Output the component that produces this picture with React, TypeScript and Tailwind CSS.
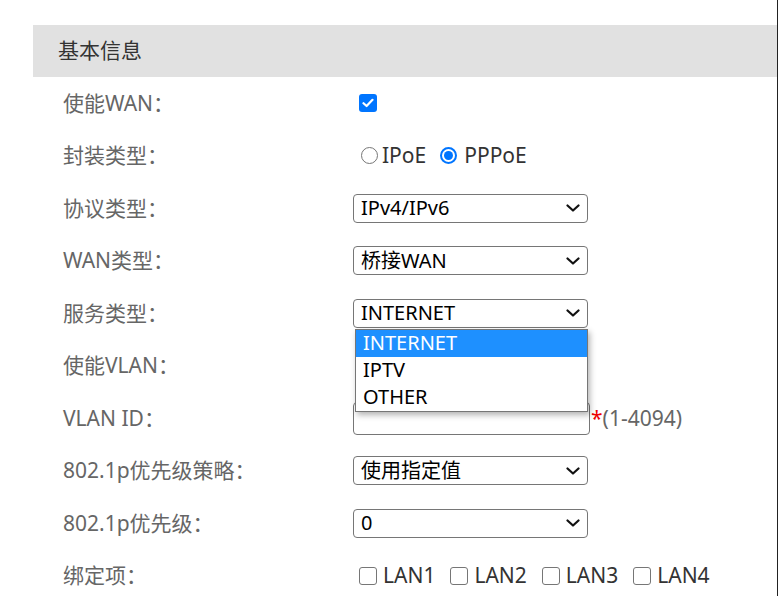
import React from 'react';

const FONT = { fontFamily: '"Noto Sans", "Noto Sans CJK SC", sans-serif' };

function Chevron() {
  return (
    <svg width="14" height="8" viewBox="0 0 14 8" className="shrink-0">
      <path d="M1.5 1.5 L7 6.5 L12.5 1.5" fill="none" stroke="#111" strokeWidth="2.2" strokeLinecap="round" strokeLinejoin="round" />
    </svg>
  );
}

function Select({ value }: { value: string }) {
  return (
    <div className="flex h-[29px] w-[235px] items-center justify-between rounded-[4px] border border-[#767676] bg-white pl-[7px] pr-[7px] text-[20px] text-black">
      <span className="leading-none">{value}</span>
      <Chevron />
    </div>
  );
}

function Check({ checked = false }: { checked?: boolean }) {
  if (checked) {
    return (
      <span className="flex h-[18px] w-[18px] items-center justify-center rounded-[3px] bg-[#0075ff]">
        <svg width="12" height="10" viewBox="0 0 12 10">
          <path d="M1.5 5.2 L4.6 8 L10.5 1.8" fill="none" stroke="#fff" strokeWidth="2.2" strokeLinecap="round" strokeLinejoin="round" />
        </svg>
      </span>
    );
  }
  return <span className="block h-[18px] w-[18px] rounded-[3px] border border-[#767676] bg-white" />;
}

function Radio({ checked = false }: { checked?: boolean }) {
  if (checked) {
    return (
      <span className="flex h-[17px] w-[17px] items-center justify-center rounded-full border-2 border-[#0075ff] bg-white">
        <span className="block h-[9px] w-[9px] rounded-full bg-[#0075ff]" />
      </span>
    );
  }
  return <span className="block h-[17px] w-[17px] rounded-full border border-[#767676] bg-white" />;
}

function Row({ label, children }: { label: string; children?: React.ReactNode }) {
  return (
    <div className="flex h-[52.5px] items-center">
      <div className="w-[353px] pl-[63px] text-[21px] text-[#666]">{label}</div>
      <div className="relative flex items-center">{children}</div>
    </div>
  );
}

export default function App() {
  return (
    <div className="relative h-[596px] w-[778px] overflow-hidden border-r border-[#222] bg-white" style={FONT}>
      <div className="pt-[25px] pl-[33px]">
        <div className="flex h-[52px] items-center bg-[#e1e1e1] pl-[25px] text-[21px] text-[#333]">基本信息</div>
      </div>

      <Row label="使能WAN：">
        <span className="ml-[6px]"><Check checked /></span>
      </Row>

      <Row label="封装类型：">
        <div className="ml-[8px] flex items-center text-[21px] text-[#333]">
          <Radio />
          <span className="ml-[4px]">IPoE</span>
          <span className="ml-[14px]"><Radio checked /></span>
          <span className="ml-[7px]">PPPoE</span>
        </div>
      </Row>

      <Row label="协议类型："><Select value="IPv4/IPv6" /></Row>
      <Row label="WAN类型："><Select value="桥接WAN" /></Row>

      <Row label="服务类型：">
        <Select value="INTERNET" />
        {/* open dropdown list */}
        <div className="absolute left-[2px] top-[30px] z-10 w-[233px] border border-[#767676] bg-white text-[20px] text-black shadow-[2px_3px_6px_rgba(0,0,0,0.3)]">
          <div className="flex h-[27px] items-center bg-[#1e90ff] pl-[7px] text-white">INTERNET</div>
          <div className="flex h-[27px] items-center pl-[7px]">IPTV</div>
          <div className="flex h-[27px] items-center pl-[7px]">OTHER</div>
        </div>
      </Row>

      <Row label="使能VLAN：" />

      <Row label="VLAN ID：">
        <div className="h-[33px] w-[237px] rounded-[4px] border border-[#767676] bg-white" />
        <span className="ml-[1px] text-[21px] text-[#e00]">*</span>
        <span className="text-[21px] text-[#666]">(1-4094)</span>
      </Row>

      <Row label="802.1p优先级策略："><Select value="使用指定值" /></Row>
      <Row label="802.1p优先级："><Select value="0" /></Row>

      <Row label="绑定项：">
        <div className="ml-[6px] flex items-center text-[21px] text-[#333]">
          {['LAN1', 'LAN2', 'LAN3', 'LAN4'].map((l, i) => (
            <div key={l} className={`flex items-center ${i > 0 ? 'ml-[15px]' : ''}`}>
              <Check />
              <span className="ml-[6px]">{l}</span>
            </div>
          ))}
        </div>
      </Row>
    </div>
  );
}
